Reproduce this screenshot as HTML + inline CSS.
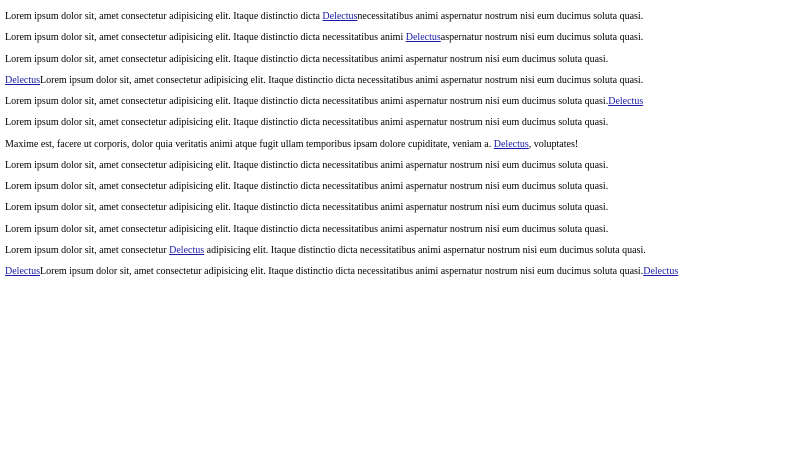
<!DOCTYPE html>
<html><head><style>
body{margin:0;padding:6px 5px;font-family:"Liberation Serif",serif;font-size:10px;color:#000;background:#fff}
div{line-height:21.25px;white-space:nowrap}
a{color:#1a1aa6;text-decoration:underline}
</style></head><body>
<div>Lorem ipsum dolor sit, amet consectetur adipisicing elit. Itaque distinctio dicta <a>Delectus</a>necessitatibus animi aspernatur nostrum nisi eum ducimus soluta quasi.</div>
<div>Lorem ipsum dolor sit, amet consectetur adipisicing elit. Itaque distinctio dicta necessitatibus animi <a>Delectus</a>aspernatur nostrum nisi eum ducimus soluta quasi.</div>
<div>Lorem ipsum dolor sit, amet consectetur adipisicing elit. Itaque distinctio dicta necessitatibus animi aspernatur nostrum nisi eum ducimus soluta quasi.</div>
<div><a>Delectus</a>Lorem ipsum dolor sit, amet consectetur adipisicing elit. Itaque distinctio dicta necessitatibus animi aspernatur nostrum nisi eum ducimus soluta quasi.</div>
<div>Lorem ipsum dolor sit, amet consectetur adipisicing elit. Itaque distinctio dicta necessitatibus animi aspernatur nostrum nisi eum ducimus soluta quasi.<a>Delectus</a></div>
<div>Lorem ipsum dolor sit, amet consectetur adipisicing elit. Itaque distinctio dicta necessitatibus animi aspernatur nostrum nisi eum ducimus soluta quasi.</div>
<div>Maxime est, facere ut corporis, dolor quia veritatis animi atque fugit ullam temporibus ipsam dolore cupiditate, veniam a. <a>Delectus</a>, voluptates!</div>
<div>Lorem ipsum dolor sit, amet consectetur adipisicing elit. Itaque distinctio dicta necessitatibus animi aspernatur nostrum nisi eum ducimus soluta quasi.</div>
<div>Lorem ipsum dolor sit, amet consectetur adipisicing elit. Itaque distinctio dicta necessitatibus animi aspernatur nostrum nisi eum ducimus soluta quasi.</div>
<div>Lorem ipsum dolor sit, amet consectetur adipisicing elit. Itaque distinctio dicta necessitatibus animi aspernatur nostrum nisi eum ducimus soluta quasi.</div>
<div>Lorem ipsum dolor sit, amet consectetur adipisicing elit. Itaque distinctio dicta necessitatibus animi aspernatur nostrum nisi eum ducimus soluta quasi.</div>
<div>Lorem ipsum dolor sit, amet consectetur <a>Delectus</a> adipisicing elit. Itaque distinctio dicta necessitatibus animi aspernatur nostrum nisi eum ducimus soluta quasi.</div>
<div><a>Delectus</a>Lorem ipsum dolor sit, amet consectetur adipisicing elit. Itaque distinctio dicta necessitatibus animi aspernatur nostrum nisi eum ducimus soluta quasi.<a>Delectus</a></div>
</body></html>
